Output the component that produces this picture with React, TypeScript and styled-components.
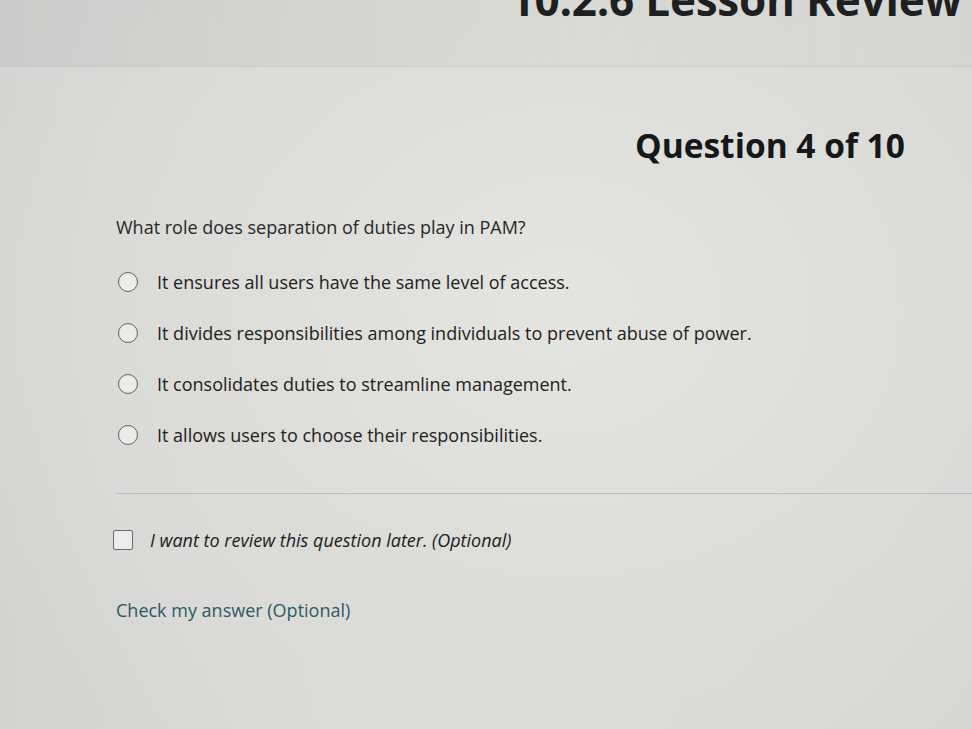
import styled, { createGlobalStyle } from "styled-components";

const GlobalStyle = createGlobalStyle`
  html, body {
    margin: 0;
    padding: 0;
    height: 100%;
  }
  body {
    font-family: "Open Sans", "Noto Sans", sans-serif;
    background: #d8d8d6;
  }
`;

const Page = styled.div`
  width: 972px;
  height: 729px;
  overflow: hidden;
  background:
    radial-gradient(ellipse 70% 75% at 58% 42%, #e4e4e0 0%, #dcdcd9 55%, rgba(210, 211, 209, 0) 100%),
    linear-gradient(90deg, #d3d3d2 0%, #dddddb 45%, #d6d7d5 100%);
`;

const Header = styled.header`
  height: 66px;
  overflow: hidden;
  background: linear-gradient(90deg, rgba(196, 196, 196, 0.55) 0%, rgba(212, 212, 210, 0.4) 60%, rgba(208, 209, 207, 0.45) 100%);
  border-bottom: 1px solid rgba(190, 190, 188, 0.4);
  display: flex;
  justify-content: flex-end;
  padding-right: 10px;
`;

const LessonTitle = styled.h1`
  margin: -31px 0 0;
  font-size: 44px;
  line-height: 60px;
  font-weight: 700;
  color: #1d1f20;
  letter-spacing: -0.2px;
  white-space: nowrap;
`;

const Content = styled.main`
  padding: 56px 0 0 116px;
`;

const QuestionCount = styled.h2`
  margin: 0 0 48px;
  padding-left: 519px;
  font-size: 33.5px;
  line-height: 44px;
  font-weight: 700;
  color: #151718;
`;

const Prompt = styled.p`
  margin: 0 0 31px;
  font-size: 18px;
  line-height: 24px;
  color: #262829;
`;

const Options = styled.div`
  display: flex;
  flex-direction: column;
  gap: 27px;
`;

const Option = styled.label`
  display: flex;
  align-items: center;
  gap: 19px;
  padding-left: 2px;
  font-size: 18px;
  line-height: 24px;
  color: #1f2122;
`;

const Radio = styled.span`
  box-sizing: border-box;
  width: 20px;
  height: 20px;
  border-radius: 50%;
  border: 1.5px solid #5d6163;
  background: #ececea;
  flex-shrink: 0;
`;

const Divider = styled.hr`
  margin: 46px 0 0;
  border: 0;
  border-top: 1.5px solid #b5bfbf;
`;

const ReviewRow = styled.label`
  display: flex;
  align-items: center;
  gap: 17px;
  margin: 34px 0 0 -3px;
  font-size: 18px;
  line-height: 24px;
  font-style: italic;
  color: #1b1d1e;
`;

const Checkbox = styled.span`
  box-sizing: border-box;
  width: 20px;
  height: 20px;
  border: 1.5px solid #6a6e70;
  border-radius: 2px;
  background: #ececea;
  flex-shrink: 0;
`;

const CheckLink = styled.p`
  margin: 46px 0 0;
  font-size: 18px;
  line-height: 24px;
  color: #2c5a62;
`;

const answers = [
  "It ensures all users have the same level of access.",
  "It divides responsibilities among individuals to prevent abuse of power.",
  "It consolidates duties to streamline management.",
  "It allows users to choose their responsibilities.",
];

export default function App() {
  return (
    <>
      <GlobalStyle />
      <Page>
        <Header>
          <LessonTitle>10.2.6 Lesson Review</LessonTitle>
        </Header>
        <Content>
          <QuestionCount>Question 4 of 10</QuestionCount>
          <Prompt>What role does separation of duties play in PAM?</Prompt>
          <Options>
            {answers.map((a) => (
              <Option key={a}>
                <Radio />
                {a}
              </Option>
            ))}
          </Options>
          <Divider />
          <ReviewRow>
            <Checkbox />
            I want to review this question later. (Optional)
          </ReviewRow>
          <CheckLink>Check my answer (Optional)</CheckLink>
        </Content>
      </Page>
    </>
  );
}
